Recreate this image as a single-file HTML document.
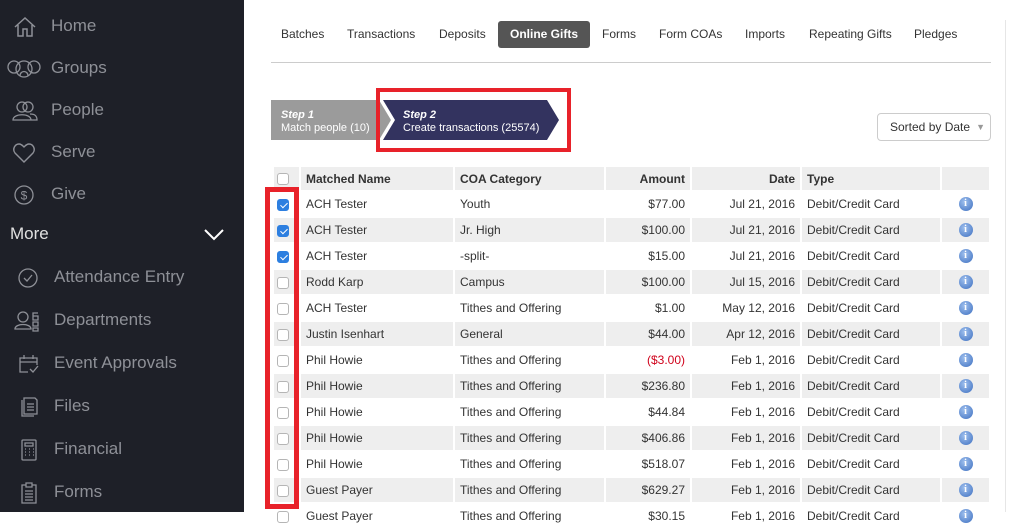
<!DOCTYPE html>
<html><head><meta charset="utf-8"><style>
*{margin:0;padding:0;box-sizing:border-box}
body{width:1011px;height:512px;overflow:hidden;background:#fff;font-family:"Liberation Sans",Arial,sans-serif;position:relative}
#sb{position:absolute;left:0;top:0;width:244px;height:512px;background:#1e2028}
.ni{position:absolute;left:0;height:30px;color:#8e9097;font-size:17px;line-height:30px}
.ni span{position:absolute;left:51px;white-space:nowrap}
.ni.s span{left:54px}
.ni svg{position:absolute;top:5px}
#tabs{position:absolute;left:271px;top:21px;height:27px;font-size:12px;color:#333}
.tab{position:absolute;top:0;height:27px;line-height:27px;white-space:nowrap}
.tab.a{background:#555;color:#fff;font-weight:bold;border-radius:3px;padding:0 12px}
#hr{position:absolute;left:271px;top:62px;width:720px;height:1px;background:#ccc}
#vr{position:absolute;left:1005px;top:20px;width:1px;height:492px;background:#e6e6e6}
table{position:absolute;left:272px;top:165px;border-collapse:separate;border-spacing:2px;font-size:12px;color:#333;table-layout:fixed}
td,th{height:24px;padding:0 5px;white-space:nowrap;overflow:hidden}
th{height:23px;background:#eee;text-align:left;font-weight:bold}
tr.g td{background:#eee}
td:first-child,th:first-child{padding:0 0 0 3px}
.r{text-align:right}
.cb{width:12px;height:12px;border:1px solid #b5b5b5;border-radius:3px;background:#fff;display:inline-block;vertical-align:middle}
.cb.c{background:#2d7fe0;border-color:#2d7fe0;position:relative}
.cb.c:after{content:"";position:absolute;left:3.5px;top:1px;width:3px;height:6px;border:solid #fff;border-width:0 1.5px 1.5px 0;transform:rotate(45deg)}
.ic{display:inline-block;width:14px;height:14px;border-radius:50%;background:radial-gradient(circle at 40% 35%,#9fc0ee,#3d6fc0);color:#fff;font-size:10px;font-weight:bold;line-height:14px;text-align:center;font-family:"Liberation Serif",serif;vertical-align:middle}
.red{color:#d0021b}
</style></head><body>
<div id="sb">
<div class="ni" style="top:11px"><svg width="24" height="22" style="left:13px" viewBox="0 0 24 22" fill="none" stroke="#8e9097" stroke-width="1.5"><path d="M2 11 L12 2 L22 11 M5 9 V20 H10 V13 H14 V20 H19 V9"/></svg><span>Home</span></div>
<div class="ni" style="top:53px"><svg width="36" height="22" style="left:6px" viewBox="0 0 36 22" fill="none" stroke="#8e9097" stroke-width="1.3"><circle cx="8" cy="9" r="6"/><circle cx="28" cy="9" r="6"/><circle cx="18" cy="11" r="8"/><path d="M14 18 C14 12 22 12 22 18"/></svg><span>Groups</span></div>
<div class="ni" style="top:95px"><svg width="26" height="22" style="left:12px" viewBox="0 0 26 22" fill="none" stroke="#8e9097" stroke-width="1.3"><circle cx="10" cy="7" r="5"/><circle cx="16" cy="7" r="5"/><path d="M1 20 C1 13 19 13 19 20 Z M18 14 C24 14 25 17 25 20 H19"/></svg><span>People</span></div>
<div class="ni" style="top:137px"><svg width="24" height="22" style="left:12px" viewBox="0 0 24 22" fill="none" stroke="#8e9097" stroke-width="1.4"><path d="M12 20 L3 11 C0 7 3 2 7 2 C9.5 2 11 4 12 5 C13 4 14.5 2 17 2 C21 2 24 7 21 11 Z"/></svg><span>Serve</span></div>
<div class="ni" style="top:179px"><svg width="24" height="22" style="left:12px" viewBox="0 0 24 22" fill="none" stroke="#8e9097" stroke-width="1.3"><circle cx="12" cy="11" r="9"/><text x="12" y="15.5" font-size="12" text-anchor="middle" fill="#8e9097" stroke="none" font-family="Liberation Sans">$</text></svg><span>Give</span></div>
<div class="ni" style="top:219px;color:#e0e0e0"><span style="left:10px">More</span><svg width="20" height="12" style="left:204px;top:10px" viewBox="0 0 20 12" fill="none" stroke="#fff" stroke-width="2"><path d="M1 1 L10 10 L19 1"/></svg></div>
<div class="ni s" style="top:262px"><svg width="22" height="22" style="left:17px" viewBox="0 0 22 22" fill="none" stroke="#8e9097" stroke-width="1.3"><circle cx="11" cy="11" r="9"/><path d="M7 11 L10 14 L15 8"/></svg><span>Attendance Entry</span></div>
<div class="ni s" style="top:305px"><svg width="28" height="22" style="left:14px" viewBox="0 0 28 22" fill="none" stroke="#8e9097" stroke-width="1.3"><circle cx="9" cy="7" r="5"/><path d="M1 19 C1 13 17 13 17 19 Z M19 6 H24 V10 H19 Z M19 12 H24 V16 H19 Z M19 18 H24 V21 H19 Z M24 3 H19 V6"/></svg><span>Departments</span></div>
<div class="ni s" style="top:348px"><svg width="22" height="22" style="left:18px" viewBox="0 0 22 22" fill="none" stroke="#8e9097" stroke-width="1.3"><path d="M10 19 H2 V5 H19 V12 M2 9 H19 M6 2 V6 M15 2 V6 M12 16 L15 19 L20 13"/></svg><span>Event Approvals</span></div>
<div class="ni s" style="top:391px"><svg width="22" height="22" style="left:19px" viewBox="0 0 22 22" fill="none" stroke="#8e9097" stroke-width="1.3"><path d="M3 4 V20 H15 M5 2 H16 L18 4 V18 H5 Z M8 8 H15 M8 11 H15 M8 14 H15"/></svg><span>Files</span></div>
<div class="ni s" style="top:434px"><svg width="22" height="22" style="left:19px" viewBox="0 0 22 22" fill="none" stroke="#8e9097" stroke-width="1.3"><rect x="3" y="1" width="14" height="20" rx="1"/><path d="M6 4 H14 V7 H6 Z M6 10 h1 M10 10 h1 M14 10 h1 M6 13 h1 M10 13 h1 M14 13 h1 M6 16 h1 M10 16 h1 M14 16 h1"/></svg><span>Financial</span></div>
<div class="ni s" style="top:477px"><svg width="22" height="22" style="left:19px" viewBox="0 0 22 22" fill="none" stroke="#8e9097" stroke-width="1.3"><path d="M7 3 H3 V21 H17 V3 H13 M7 1 H13 V5 H7 Z M6 9 H14 M6 12 H14 M6 15 H14 M6 18 H14"/></svg><span>Forms</span></div>
</div>

<div id="tabs">
<div class="tab" style="left:10px">Batches</div>
<div class="tab" style="left:76px">Transactions</div>
<div class="tab" style="left:168px">Deposits</div>
<div class="tab a" style="left:227px">Online Gifts</div>
<div class="tab" style="left:331px">Forms</div>
<div class="tab" style="left:388px">Form COAs</div>
<div class="tab" style="left:474px">Imports</div>
<div class="tab" style="left:538px">Repeating Gifts</div>
<div class="tab" style="left:643px">Pledges</div>
</div>
<div id="hr"></div>
<div id="vr"></div>

<svg style="position:absolute;left:271px;top:100px" width="290" height="40" viewBox="0 0 290 40">
<polygon points="0,0 108,0 120,20 108,40 0,40" fill="#9b9b9b"/>
<polygon points="112,0 276,0 288,20 276,40 112,40 124,20" fill="#33335f"/>
<g font-family="Liberation Sans" font-size="11" fill="#fff">
<text x="10" y="18" font-style="italic" font-weight="bold">Step 1</text>
<text x="10" y="31">Match people (10)</text>
<text x="132" y="18" font-style="italic" font-weight="bold">Step 2</text>
<text x="132" y="31">Create transactions (25574)</text></g>
</svg>
<div style="position:absolute;left:376px;top:88px;width:195px;height:64px;border:4px solid #e8222a"></div>

<div style="position:absolute;left:877px;top:113px;width:114px;height:28px;border:1px solid #ccc;border-radius:4px;font-size:12px;color:#333;line-height:26px;padding-left:12px">Sorted by Date<span style="position:absolute;right:5px;top:0;color:#999;font-size:9px">▼</span></div>

<table>
<colgroup><col style="width:25px"><col style="width:152px"><col style="width:149px"><col style="width:84px"><col style="width:108px"><col style="width:138px"><col style="width:47px"></colgroup>
<tr><th><span class="cb"></span></th><th>Matched Name</th><th>COA Category</th><th class="r">Amount</th><th class="r">Date</th><th>Type</th><th></th></tr>
<tr><td><span class="cb c"></span></td><td>ACH Tester</td><td>Youth</td><td class="r">$77.00</td><td class="r">Jul 21, 2016</td><td>Debit/Credit Card</td><td style="text-align:center"><span class="ic">i</span></td></tr>
<tr class="g"><td><span class="cb c"></span></td><td>ACH Tester</td><td>Jr. High</td><td class="r">$100.00</td><td class="r">Jul 21, 2016</td><td>Debit/Credit Card</td><td style="text-align:center"><span class="ic">i</span></td></tr>
<tr><td><span class="cb c"></span></td><td>ACH Tester</td><td>-split-</td><td class="r">$15.00</td><td class="r">Jul 21, 2016</td><td>Debit/Credit Card</td><td style="text-align:center"><span class="ic">i</span></td></tr>
<tr class="g"><td><span class="cb"></span></td><td>Rodd Karp</td><td>Campus</td><td class="r">$100.00</td><td class="r">Jul 15, 2016</td><td>Debit/Credit Card</td><td style="text-align:center"><span class="ic">i</span></td></tr>
<tr><td><span class="cb"></span></td><td>ACH Tester</td><td>Tithes and Offering</td><td class="r">$1.00</td><td class="r">May 12, 2016</td><td>Debit/Credit Card</td><td style="text-align:center"><span class="ic">i</span></td></tr>
<tr class="g"><td><span class="cb"></span></td><td>Justin Isenhart</td><td>General</td><td class="r">$44.00</td><td class="r">Apr 12, 2016</td><td>Debit/Credit Card</td><td style="text-align:center"><span class="ic">i</span></td></tr>
<tr><td><span class="cb"></span></td><td>Phil Howie</td><td>Tithes and Offering</td><td class="r red">($3.00)</td><td class="r">Feb 1, 2016</td><td>Debit/Credit Card</td><td style="text-align:center"><span class="ic">i</span></td></tr>
<tr class="g"><td><span class="cb"></span></td><td>Phil Howie</td><td>Tithes and Offering</td><td class="r">$236.80</td><td class="r">Feb 1, 2016</td><td>Debit/Credit Card</td><td style="text-align:center"><span class="ic">i</span></td></tr>
<tr><td><span class="cb"></span></td><td>Phil Howie</td><td>Tithes and Offering</td><td class="r">$44.84</td><td class="r">Feb 1, 2016</td><td>Debit/Credit Card</td><td style="text-align:center"><span class="ic">i</span></td></tr>
<tr class="g"><td><span class="cb"></span></td><td>Phil Howie</td><td>Tithes and Offering</td><td class="r">$406.86</td><td class="r">Feb 1, 2016</td><td>Debit/Credit Card</td><td style="text-align:center"><span class="ic">i</span></td></tr>
<tr><td><span class="cb"></span></td><td>Phil Howie</td><td>Tithes and Offering</td><td class="r">$518.07</td><td class="r">Feb 1, 2016</td><td>Debit/Credit Card</td><td style="text-align:center"><span class="ic">i</span></td></tr>
<tr class="g"><td><span class="cb"></span></td><td>Guest Payer</td><td>Tithes and Offering</td><td class="r">$629.27</td><td class="r">Feb 1, 2016</td><td>Debit/Credit Card</td><td style="text-align:center"><span class="ic">i</span></td></tr>
<tr><td><span class="cb"></span></td><td>Guest Payer</td><td>Tithes and Offering</td><td class="r">$30.15</td><td class="r">Feb 1, 2016</td><td>Debit/Credit Card</td><td style="text-align:center"><span class="ic">i</span></td></tr>
</table>
<div style="position:absolute;left:265px;top:187px;width:34px;height:322px;border:5px solid #e8222a"></div>
</body></html>
